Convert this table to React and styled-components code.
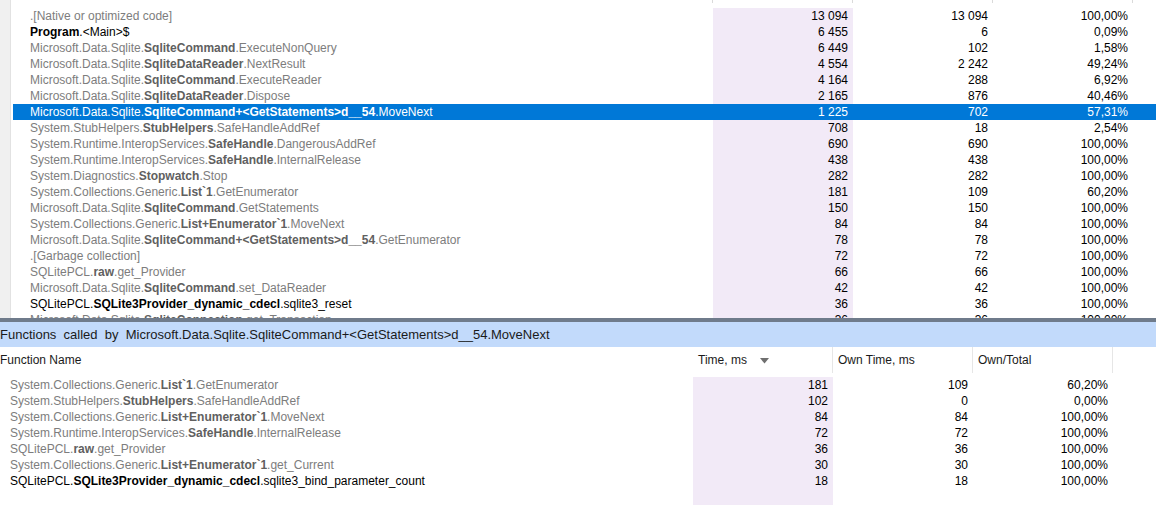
import styled, { createGlobalStyle } from "styled-components";

const GlobalStyle = createGlobalStyle`
  html, body {
    margin: 0;
    padding: 0;
    background: #ffffff;
  }
  body {
    font-family: "Liberation Sans", Arial, sans-serif;
    font-size: 12px;
  }
`;

const PINK = "#f2eaf7";

const Page = styled.div`
  width: 1156px;
  height: 505px;
  overflow: hidden;
  display: flex;
  flex-direction: column;
  background: #ffffff;
`;

const TopPanel = styled.div`
  height: 318px;
  flex: none;
  overflow: hidden;
  display: flex;
`;

const Gutter = styled.div`
  width: 10px;
  flex: none;
  background: #f0f0f0;
  border-right: 1px solid #e2e2e2;
  margin-right: 2px;
`;

const TopGrid = styled.div`
  flex: 1;
  display: flex;
  flex-direction: column;
`;

const Columns = styled.div`
  display: grid;
  grid-template-columns: ${(p) => p.$name}px 140px 140px 140px 1fr;
`;

const HeaderStub = styled(Columns)`
  height: 3px;
  flex: none;
  margin-bottom: 5px;
  & > div {
    border-right: 1px solid #dadada;
  }
  & > div:last-child {
    border-right: none;
  }
`;

const Body = styled.div`
  flex: 1 0 auto;
  display: flex;
  flex-direction: column;
  background: linear-gradient(
    to right,
    transparent ${(p) => p.$name}px,
    ${PINK} ${(p) => p.$name}px,
    ${PINK} ${(p) => p.$name + 140}px,
    transparent ${(p) => p.$name + 140}px
  );
`;

const Row = styled(Columns)`
  height: 16px;
  line-height: 16px;
  flex: none;
  white-space: nowrap;
  background: ${(p) => (p.$selected ? "#0078d7" : "transparent")};
  color: ${(p) => (p.$selected ? "#ffffff" : "#000000")};
`;

const NameCell = styled.div`
  padding-left: ${(p) => p.$indent}px;
  overflow: hidden;
  color: ${(p) =>
    p.$selected ? "#ffffff" : p.$tone === "strong" ? "#000000" : "#7d7d7d"};
`;

const Cls = styled.b`
  font-weight: 700;
  color: ${(p) =>
    p.$selected ? "#ffffff" : p.$tone === "strong" ? "#000000" : "#606060"};
`;

const NumCell = styled.div`
  text-align: right;
  padding-right: 5px;
`;

const Splitter = styled.div`
  height: 4px;
  flex: none;
  background: #6f7b8b;
`;

const TitleBar = styled.div`
  height: 25px;
  flex: none;
  background: #c2dafb;
  color: #1a1a1a;
  font-size: 13px;
  line-height: 25px;
  white-space: pre;
`;

const BottomPanel = styled.div`
  flex: 1;
  display: flex;
  flex-direction: column;
  overflow: hidden;
`;

const HeaderRow = styled(Columns)`
  height: 26px;
  flex: none;
  margin-bottom: 4px;
  color: #1a1a1a;
`;

const HeaderCell = styled.div`
  display: flex;
  align-items: center;
  padding-left: ${(p) => (p.$first ? 0 : 5)}px;
  border-right: ${(p) => (p.$sep ? "1px solid #e6e6e6" : "none")};
`;

const SortArrow = styled.svg`
  margin-left: 13px;
  margin-top: 1px;
`;

const topRows = [
  { ns: ".[Native or optimized code]", cls: "", m: "", t: "13 094", o: "13 094", r: "100,00%" },
  { ns: "", cls: "Program", m: ".<Main>$", t: "6 455", o: "6", r: "0,09%", tone: "strong" },
  { ns: "Microsoft.Data.Sqlite.", cls: "SqliteCommand", m: ".ExecuteNonQuery", t: "6 449", o: "102", r: "1,58%" },
  { ns: "Microsoft.Data.Sqlite.", cls: "SqliteDataReader", m: ".NextResult", t: "4 554", o: "2 242", r: "49,24%" },
  { ns: "Microsoft.Data.Sqlite.", cls: "SqliteCommand", m: ".ExecuteReader", t: "4 164", o: "288", r: "6,92%" },
  { ns: "Microsoft.Data.Sqlite.", cls: "SqliteDataReader", m: ".Dispose", t: "2 165", o: "876", r: "40,46%" },
  { ns: "Microsoft.Data.Sqlite.", cls: "SqliteCommand+<GetStatements>d__54", m: ".MoveNext", t: "1 225", o: "702", r: "57,31%", selected: true },
  { ns: "System.StubHelpers.", cls: "StubHelpers", m: ".SafeHandleAddRef", t: "708", o: "18", r: "2,54%" },
  { ns: "System.Runtime.InteropServices.", cls: "SafeHandle", m: ".DangerousAddRef", t: "690", o: "690", r: "100,00%" },
  { ns: "System.Runtime.InteropServices.", cls: "SafeHandle", m: ".InternalRelease", t: "438", o: "438", r: "100,00%" },
  { ns: "System.Diagnostics.", cls: "Stopwatch", m: ".Stop", t: "282", o: "282", r: "100,00%" },
  { ns: "System.Collections.Generic.", cls: "List`1", m: ".GetEnumerator", t: "181", o: "109", r: "60,20%" },
  { ns: "Microsoft.Data.Sqlite.", cls: "SqliteCommand", m: ".GetStatements", t: "150", o: "150", r: "100,00%" },
  { ns: "System.Collections.Generic.", cls: "List+Enumerator`1", m: ".MoveNext", t: "84", o: "84", r: "100,00%" },
  { ns: "Microsoft.Data.Sqlite.", cls: "SqliteCommand+<GetStatements>d__54", m: ".GetEnumerator", t: "78", o: "78", r: "100,00%" },
  { ns: ".[Garbage collection]", cls: "", m: "", t: "72", o: "72", r: "100,00%" },
  { ns: "SQLitePCL.", cls: "raw", m: ".get_Provider", t: "66", o: "66", r: "100,00%" },
  { ns: "Microsoft.Data.Sqlite.", cls: "SqliteCommand", m: ".set_DataReader", t: "42", o: "42", r: "100,00%" },
  { ns: "SQLitePCL.", cls: "SQLite3Provider_dynamic_cdecl", m: ".sqlite3_reset", t: "36", o: "36", r: "100,00%", tone: "strong" },
  { ns: "Microsoft.Data.Sqlite.", cls: "SqliteConnection", m: ".get_Transaction", t: "36", o: "36", r: "100,00%" },
];

const calleeRows = [
  { ns: "System.Collections.Generic.", cls: "List`1", m: ".GetEnumerator", t: "181", o: "109", r: "60,20%" },
  { ns: "System.StubHelpers.", cls: "StubHelpers", m: ".SafeHandleAddRef", t: "102", o: "0", r: "0,00%" },
  { ns: "System.Collections.Generic.", cls: "List+Enumerator`1", m: ".MoveNext", t: "84", o: "84", r: "100,00%" },
  { ns: "System.Runtime.InteropServices.", cls: "SafeHandle", m: ".InternalRelease", t: "72", o: "72", r: "100,00%" },
  { ns: "SQLitePCL.", cls: "raw", m: ".get_Provider", t: "36", o: "36", r: "100,00%" },
  { ns: "System.Collections.Generic.", cls: "List+Enumerator`1", m: ".get_Current", t: "30", o: "30", r: "100,00%" },
  { ns: "SQLitePCL.", cls: "SQLite3Provider_dynamic_cdecl", m: ".sqlite3_bind_parameter_count", t: "18", o: "18", r: "100,00%", tone: "strong" },
];

const FuncRow = ({ row, nameWidth, indent }) => (
  <Row $name={nameWidth} $selected={row.selected}>
    <NameCell $indent={indent} $tone={row.tone} $selected={row.selected}>
      {row.ns}
      {row.cls && (
        <Cls $tone={row.tone} $selected={row.selected}>
          {row.cls}
        </Cls>
      )}
      {row.m}
    </NameCell>
    <NumCell>{row.t}</NumCell>
    <NumCell>{row.o}</NumCell>
    <NumCell>{row.r}</NumCell>
    <div />
  </Row>
);

export default function App() {
  return (
    <Page>
      <GlobalStyle />
      <TopPanel>
        <Gutter />
        <TopGrid>
          <HeaderStub $name={700}>
            <div />
            <div />
            <div />
            <div />
            <div />
          </HeaderStub>
          <Body $name={700}>
            {topRows.map((row, i) => (
              <FuncRow key={i} row={row} nameWidth={700} indent={17} />
            ))}
          </Body>
        </TopGrid>
      </TopPanel>
      <Splitter />
      <TitleBar>
        {"Functions  called  by  Microsoft.Data.Sqlite.SqliteCommand+<GetStatements>d__54.MoveNext"}
      </TitleBar>
      <BottomPanel>
        <HeaderRow $name={693}>
          <HeaderCell $first>Function Name</HeaderCell>
          <HeaderCell $sep>
            Time, ms
            <SortArrow width="9" height="6" viewBox="0 0 9 6">
              <path d="M0 0 L9 0 L4.5 5.5 Z" fill="#6f6f6f" />
            </SortArrow>
          </HeaderCell>
          <HeaderCell $sep>Own Time, ms</HeaderCell>
          <HeaderCell $sep>Own/Total</HeaderCell>
          <HeaderCell />
        </HeaderRow>
        <Body $name={693}>
          {calleeRows.map((row, i) => (
            <FuncRow key={i} row={row} nameWidth={693} indent={10} />
          ))}
        </Body>
      </BottomPanel>
    </Page>
  );
}
